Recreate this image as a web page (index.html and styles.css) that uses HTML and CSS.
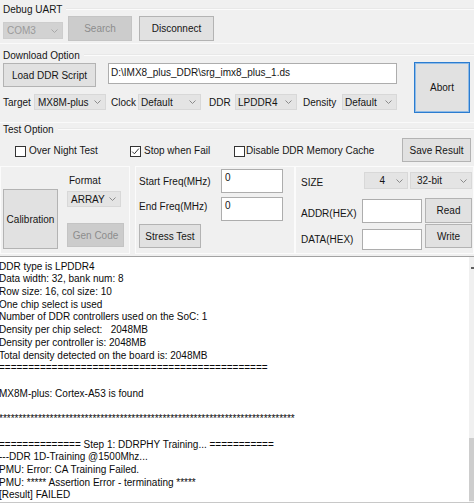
FILE: index.html
```html
<!DOCTYPE html>
<html>
<head>
<meta charset="utf-8">
<title>DDR Tool</title>
<link rel="stylesheet" href="styles.css">
</head>
<body>
<div class="app">
  <section class="grp g-uart">
    <div class="legend"><span>Debug UART</span></div>
    <div class="row r-uart">
      <div class="combo disabled w-com"><span>COM3</span><svg class="arr" width="7" height="4" viewBox="0 0 7 4"><polyline points="0.5,0.5 3.5,3.5 6.5,0.5" fill="none" stroke="#a8a8a8" stroke-width="1"/></svg></div>
      <button class="btn disabled b-search">Search</button>
      <button class="btn b-disc">Disconnect</button>
    </div>
  </section>

  <section class="grp g-dl">
    <div class="legend"><span>Download Option</span></div>
    <div class="row r-dl">
      <div class="dl-left">
        <div class="row r-load">
          <button class="btn b-load">Load DDR Script</button>
          <div class="tb t-path">D:\IMX8_plus_DDR\srg_imx8_plus_1.ds</div>
        </div>
        <div class="row r-opts">
          <span class="lbl l-target">Target</span>
          <div class="combo w-target"><span>MX8M-plus</span><svg class="arr" width="7" height="4" viewBox="0 0 7 4"><polyline points="0.5,0.5 3.5,3.5 6.5,0.5" fill="none" stroke="#8a8a8a" stroke-width="1"/></svg></div>
          <span class="lbl l-clock">Clock</span>
          <div class="combo w-clock"><span>Default</span><svg class="arr" width="7" height="4" viewBox="0 0 7 4"><polyline points="0.5,0.5 3.5,3.5 6.5,0.5" fill="none" stroke="#8a8a8a" stroke-width="1"/></svg></div>
          <span class="lbl l-ddr">DDR</span>
          <div class="combo w-ddr"><span>LPDDR4</span><svg class="arr" width="7" height="4" viewBox="0 0 7 4"><polyline points="0.5,0.5 3.5,3.5 6.5,0.5" fill="none" stroke="#8a8a8a" stroke-width="1"/></svg></div>
          <span class="lbl l-dens">Density</span>
          <div class="combo w-dens"><span>Default</span><svg class="arr" width="7" height="4" viewBox="0 0 7 4"><polyline points="0.5,0.5 3.5,3.5 6.5,0.5" fill="none" stroke="#8a8a8a" stroke-width="1"/></svg></div>
        </div>
      </div>
      <button class="btn b-abort">Abort</button>
    </div>
  </section>

  <section class="grp g-test">
    <div class="legend"><span>Test Option</span></div>
    <div class="row r-checks">
      <label class="chk c1"><span class="box"></span>Over Night Test</label>
      <label class="chk c2"><span class="box"><svg width="9" height="9" viewBox="0 0 9 9"><polyline points="1.2,4.6 3.4,6.8 7.8,1.6" fill="none" stroke="#333" stroke-width="1"/></svg></span>Stop when Fail</label>
      <label class="chk c3"><span class="box"></span>Disable DDR Memory Cache</label>
      <button class="btn b-save">Save Result</button>
    </div>
    <div class="row r-sub">
      <div class="sub s-cal">
        <button class="btn b-cal">Calibration</button>
        <div class="cal-col">
          <span class="lbl l-format">Format</span>
          <div class="combo w-format"><span>ARRAY</span><svg class="arr" width="7" height="4" viewBox="0 0 7 4"><polyline points="0.5,0.5 3.5,3.5 6.5,0.5" fill="none" stroke="#8a8a8a" stroke-width="1"/></svg></div>
          <button class="btn disabled b-gen">Gen Code</button>
        </div>
      </div>
      <div class="sub s-freq">
        <div class="row fr fr1"><span class="lbl l-freq">Start Freq(MHz)</span><div class="tb t-freq">0</div></div>
        <div class="row fr fr2"><span class="lbl l-freq">End Freq(MHz)</span><div class="tb t-freq">0</div></div>
        <button class="btn b-stress">Stress Test</button>
      </div>
      <div class="sub s-mem">
        <div class="row m1">
          <span class="lbl l-size">SIZE</span>
          <div class="combo w-size"><span>4</span><svg class="arr" width="7" height="4" viewBox="0 0 7 4"><polyline points="0.5,0.5 3.5,3.5 6.5,0.5" fill="none" stroke="#8a8a8a" stroke-width="1"/></svg></div>
          <div class="combo w-bit"><span>32-bit</span><svg class="arr" width="7" height="4" viewBox="0 0 7 4"><polyline points="0.5,0.5 3.5,3.5 6.5,0.5" fill="none" stroke="#8a8a8a" stroke-width="1"/></svg></div>
        </div>
        <div class="row m2">
          <span class="lbl l-hex">ADDR(HEX)</span>
          <div class="tb t-addr"></div>
          <button class="btn b-read">Read</button>
        </div>
        <div class="row m3">
          <span class="lbl l-hex">DATA(HEX)</span>
          <div class="tb t-data"></div>
          <button class="btn b-write">Write</button>
        </div>
      </div>
    </div>
  </section>

  <div class="log">
    <div class="log-text">DDR type is LPDDR4
Data width: 32, bank num: 8
Row size: 16, col size: 10
One chip select is used
Number of DDR controllers used on the SoC: 1
Density per chip select:   2048MB
Density per controller is: 2048MB
Total density detected on the board is: 2048MB
==============================================

MX8M-plus: Cortex-A53 is found

****************************************************************************

============== Step 1: DDRPHY Training... ===========
---DDR 1D-Training @1500Mhz...
PMU: Error: CA Training Failed.
PMU: ***** Assertion Error - terminating *****
[Result] FAILED</div>
    <div class="vscroll"><span class="up"></span><span class="thumb"></span></div>
  </div>
</div>
</body>
</html>
```

FILE: styles.css
```css
* { box-sizing: border-box; }
html, body { margin: 0; padding: 0; background: #f0f0f0; }
body {
  font-family: "Liberation Sans", Arial, sans-serif;
  font-size: 10px;
  color: #151515;
}
.app {
  width: 474px;
  height: 503px;
  overflow: hidden;
  display: flex;
  flex-direction: column;
}

/* group boxes */
.grp { flex: none; }
.legend {
  display: flex;
  align-items: center;
  height: 13px;
  line-height: 13px;
  padding-left: 3px;
  white-space: nowrap;
}
.legend::after {
  content: "";
  flex: 1;
  height: 1px;
  margin-left: 4px;
  background: #fbfbfb;
  box-shadow: 0 -1px 0 #e8e8e8;
}
.row { display: flex; align-items: flex-start; }
.lbl { white-space: nowrap; line-height: 13px; }

/* controls */
.btn {
  font: inherit;
  color: #151515;
  padding: 0;
  margin: 0;
  background: #e1e1e1;
  border: 1px solid #b3b3b3;
  display: flex;
  align-items: center;
  justify-content: center;
  white-space: nowrap;
  flex: none;
}
.btn.disabled { background: #cccccc; border-color: #c4c4c4; color: #8c8c8c; }
.combo {
  flex: none;
  display: flex;
  align-items: center;
  justify-content: space-between;
  background: #e4e4e4;
  border: 1px solid #d8d8d8;
  padding: 0 4px 0 3px;
  height: 16px;
  white-space: nowrap;
}
.combo.disabled { background: #d2d2d2; border-color: #cdcdcd; color: #9a9a9a; }
.arr { display: block; flex: none; }
.tb {
  flex: none;
  background: #fff;
  border: 1px solid #adadad;
  padding: 1px 2px;
  line-height: 13px;
  white-space: nowrap;
  overflow: hidden;
}

/* Debug UART */
.g-uart { height: 44px; box-shadow: inset 0 -1px 0 #fafafa; }
.g-uart .legend { margin-top: 3px; }
.w-com { margin-left: 3px; margin-top: 6px; width: 60px; height: 17px; }
.b-search { margin-left: 5px; width: 64px; height: 25px; }
.b-disc { margin-left: 7px; width: 75px; height: 25px; }

/* Download Option */
.g-dl { height: 79px; box-shadow: inset 0 -1px 0 #fafafa; }
.g-dl .legend { margin-top: 5px; }
.dl-left { width: 397px; flex: none; }
.r-load { height: 25px; }
.b-load { margin-left: 3px; margin-top: 1px; width: 93px; height: 24px; }
.t-path { margin-left: 12px; margin-top: 1px; width: 289px; height: 21px; padding-top: 2px; }
.r-opts { margin-top: 7px; height: 16px; align-items: center; }
.l-target { margin-left: 3px; width: 31px; }
.w-target { width: 72px; }
.l-clock { width: 32px; padding-left: 5px; }
.w-clock { width: 63px; padding-left: 2px; }
.l-ddr { width: 34px; padding-left: 8px; }
.w-ddr { width: 62px; padding-left: 2px; }
.l-dens { width: 45px; padding-left: 6px; }
.w-dens { width: 55px; padding-left: 2px; }
.b-abort {
  margin-left: 17px;
  width: 56px;
  height: 51px;
  border: 1px solid #2b7cd0;
  box-shadow: inset 0 0 0 1px #8fbbe6;
}

/* Test Option */
.g-test { height: 133px; }
.r-checks { margin-top: 2px; height: 24px; }
.chk { display: flex; align-items: center; height: 24px; white-space: nowrap; }
.box {
  width: 11px;
  height: 11px;
  margin-top: 2px;
  margin-right: 3px;
  border: 1px solid #333;
  background: #fff;
  display: flex;
  align-items: center;
  justify-content: center;
  flex: none;
}
.box svg { display: block; }
.c1 { margin-left: 15px; width: 115px; }
.c2 { width: 104px; }
.c3 { width: 168px; }
.c3 .box { margin-right: 1px; }
.b-save { width: 69px; height: 24px; }

.r-sub { margin-top: 4px; height: 88px; }
.sub {
  height: 88px;
  flex: none;
  box-shadow: inset 0 1px 0 #fbfbfb, inset -1px 0 0 #fbfbfb, inset 1px 0 0 #fbfbfb, inset 0 -1px 0 #fbfbfb;
}
.s-cal { width: 130px; display: flex; align-items: flex-start; }
.b-cal { margin-left: 3px; margin-top: 23px; width: 55px; height: 60px; }
.cal-col { margin-left: 9px; display: flex; flex-direction: column; align-items: flex-start; }
.l-format { margin-top: 8px; padding-left: 2px; }
.w-format { margin-top: 4px; width: 54px; }
.b-gen { margin-top: 16px; width: 57px; height: 24px; }

.s-freq { margin-left: 5px; width: 160px; }
.fr { height: 24px; }
.fr1 { margin-top: 3px; }
.fr2 { margin-top: 4px; }
.l-freq { width: 86px; padding-left: 4px; }
.fr1 .l-freq { margin-top: 6px; }
.fr2 .l-freq { margin-top: 3px; }
.t-freq { width: 62px; height: 24px; padding-left: 3px; }
.b-stress { margin-left: 4px; margin-top: 3px; width: 62px; height: 24px; }

.s-mem { width: 179px; }
.m1 { margin-top: 6px; height: 17px; }
.l-size { width: 69px; padding-left: 6px; margin-top: 4px; }
.w-size { width: 44px; height: 17px; justify-content: flex-end; }
.w-size span { margin-right: 11px; }
.w-bit { margin-left: 2px; width: 62px; height: 17px; padding-left: 6px; }
.m2 { margin-top: 9px; height: 25px; }
.m3 { margin-top: 1px; height: 26px; }
.l-hex { width: 67px; padding-left: 6px; margin-top: 9px; }
.t-addr { margin-top: 1px; width: 60px; height: 24px; }
.t-data { margin-top: 5px; width: 60px; height: 21px; }
.b-read { margin-left: 3px; width: 47px; height: 25px; }
.b-write { margin-left: 3px; width: 47px; height: 24px; }

/* log */
.log {
  flex: 1;
  min-height: 0;
  display: flex;
  background: #fff;
  border-top: 1px solid #a3a3a3;
  border-bottom: 1px solid #c8c8c8;
}
.log-text {
  flex: 1;
  min-width: 0;
  margin-left: -1px;
  padding-top: 3.5px;
  white-space: pre;
  line-height: 12.72px;
  overflow: hidden;
  color: #0a0a0a;
}
.vscroll {
  width: 5px;
  flex: none;
  background: #f0f0f0;
  display: flex;
  flex-direction: column;
}
.up { margin-top: 10px; margin-left: 2px; width: 3px; height: 2px; background: #606060; }
.thumb { margin-top: auto; margin-bottom: 1px; height: 63px; background: #cdcdcd; }
```
